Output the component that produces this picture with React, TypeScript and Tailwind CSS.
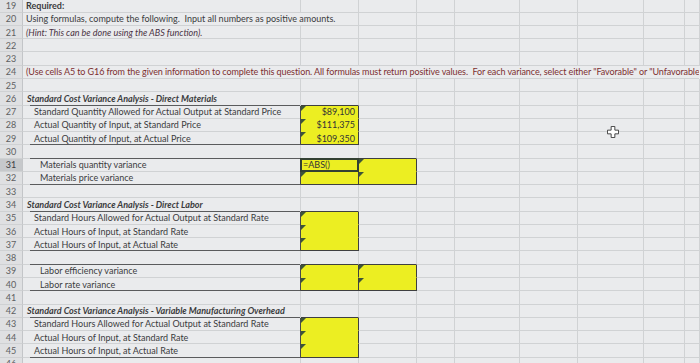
import React from "react";

type Row = {
  n: number;
  text?: string;
  x?: number;
  bold?: boolean;
  italic?: boolean;
  color?: string;
  spill?: number;
  boxBottom?: boolean;
  sel?: boolean;
  y?: number[];
  vals?: Record<number, string>;
  tri?: number[];
  active?: number;
};

const rows: Row[] = [
  { n: 19, text: "Required:", x: 26, bold: true },
  { n: 20, text: "Using formulas, compute the following.  Input all numbers as positive amounts.", x: 26, spill: 2 },
  { n: 21, text: "(Hint: This can be done using the ABS function).", x: 26, italic: true, color: "hint" },
  { n: 22 },
  { n: 23 },
  {
    n: 24,
    text: '(Use cells A5 to G16 from the given information to complete this question. All formulas must return positive values.  For each variance, select either "Favorable" or "Unfavorable"',
    x: 26,
    spill: 9,
    color: "red",
  },
  { n: 25 },
  { n: 26, text: "Standard Cost Variance Analysis - Direct Materials", x: 27, bold: true, italic: true, boxBottom: true },
  { n: 27, text: "Standard Quantity Allowed for Actual Output at Standard Price", x: 34, y: [1], vals: { 1: "$89,100" }, tri: [1] },
  { n: 28, text: "Actual Quantity of Input, at Standard Price", x: 34, y: [1], vals: { 1: "$111,375" }, tri: [1] },
  { n: 29, text: "Actual Quantity of Input, at Actual Price", x: 34, y: [1], vals: { 1: "$109,350" }, tri: [1], boxBottom: true },
  { n: 30, boxBottom: true },
  { n: 31, text: "Materials quantity variance", x: 40, y: [1, 2], sel: true, active: 1, vals: { 1: "=ABS()" }, tri: [2] },
  { n: 32, text: "Materials price variance", x: 40, y: [1, 2], tri: [1, 2], boxBottom: true },
  { n: 33 },
  { n: 34, text: "Standard Cost Variance Analysis - Direct Labor", x: 27, bold: true, italic: true, boxBottom: true },
  { n: 35, text: "Standard Hours Allowed for Actual Output at Standard Rate", x: 34, y: [1], tri: [1] },
  { n: 36, text: "Actual Hours of Input, at Standard Rate", x: 34, y: [1], tri: [1] },
  { n: 37, text: "Actual Hours of Input, at Actual Rate", x: 34, y: [1], tri: [1], boxBottom: true },
  { n: 38, boxBottom: true },
  { n: 39, text: "Labor efficiency variance", x: 40, y: [1, 2], tri: [1, 2] },
  { n: 40, text: "Labor rate variance", x: 40, y: [1, 2], tri: [1, 2], boxBottom: true },
  { n: 41 },
  { n: 42, text: "Standard Cost Variance Analysis - Variable Manufacturing Overhead", x: 27, bold: true, italic: true, boxBottom: true },
  { n: 43, text: "Standard Hours Allowed for Actual Output at Standard Rate", x: 34, y: [1], tri: [1] },
  { n: 44, text: "Actual Hours of Input, at Standard Rate", x: 34, y: [1], tri: [1] },
  { n: 45, text: "Actual Hours of Input, at Actual Rate", x: 34, y: [1], tri: [1], boxBottom: true },
  { n: 46 },
];

const COLW = [
  "w-[278px]",
  "w-[58px]",
  "w-[58px]",
  "w-[38px]",
  "w-[65px]",
  "w-[58px]",
  "w-[66px]",
  "w-[41px]",
  "flex-1",
];

const isY = (r: Row | undefined, c: number) => !!r && !!r.y && r.y.includes(c);

function TextCell({ row, widthClass, dark }: { row: Row; widthClass: string; dark: boolean }) {
  const colorCls =
    row.color === "red" ? "text-[#7d2f30] tracking-[-0.09px]" : row.color === "hint" ? "text-[#4b3344]" : "text-[#3b3b3d]";
  const pad = (row.x ?? 26) - 23;
  return (
    <div
      className={`${widthClass} shrink-0 flex flex-col border-r ${
        row.spill === 9 ? "border-r-transparent" : dark ? "border-r-[#48494b]" : "border-r-[#d0d2d4]"
      } overflow-hidden`}
    >
      <div className="flex-1 flex items-center min-h-0">
        {row.text && (
          <span
            className={`whitespace-pre leading-none ${colorCls} ${row.bold ? "font-bold" : ""} ${
              row.italic ? "italic" : ""
            }`}
            style={{ paddingLeft: pad }}
          >
            {row.text}
          </span>
        )}
      </div>
      <div className="h-px flex shrink-0">
        <div className="w-[7px] bg-[#d0d2d4]" />
        <div className={`flex-1 ${row.boxBottom ? "bg-[#5a5b5d]" : "bg-[#d0d2d4]"}`} />
      </div>
    </div>
  );
}

function DataCell({ row, next, c }: { row: Row; next?: Row; c: number }) {
  const y = isY(row, c);
  const rightDark = y || isY(row, c + 1);
  const yn = isY(next, c);
  const bottom = y !== yn ? "border-b-[#3e3f41]" : y ? "border-b-[#ecee22]" : "border-b-[#d0d2d4]";
  const right = rightDark ? "border-r-[#3e3f41]" : "border-r-[#d0d2d4]";
  const val = row.vals?.[c];
  const isActive = row.active === c;
  return (
    <div
      className={`${COLW[c]} shrink-0 relative border-r border-b ${right} ${bottom} ${
        y ? "bg-[#ecee22]" : ""
      } flex items-center ${isActive ? "justify-start pl-[2px]" : "justify-end pr-[3px]"}`}
    >
      {row.tri?.includes(c) && (
        <span className="absolute left-0 top-0 w-0 h-0 border-t-[5px] border-r-[5px] border-t-[#3d5538] border-r-transparent" />
      )}
      {val && <span className="leading-none text-[#333335]">{val}</span>}
      {isActive && <span className="pointer-events-none absolute -left-px -top-px -right-px -bottom-px border-2 border-[#334033]" />}
    </div>
  );
}

function SheetRow({ row, next }: { row: Row; next?: Row }) {
  const spill = row.spill ?? 1;
  const widthClass = spill === 2 ? "w-[336px]" : spill === 9 ? "flex-1" : COLW[0];
  const cells: number[] = [];
  for (let c = spill; c < 9; c++) cells.push(c);
  return (
    <div className="flex h-[13.28px] shrink-0">
      <div
        className={`w-[23px] shrink-0 flex items-center justify-center border-r border-b border-r-[#c3c5c8] border-b-[#cfd1d3] leading-none ${
          row.sel ? "bg-[#c6c8cb] text-[#3f4042]" : "bg-[#dfe0e2] text-[#5e5f61]"
        }`}
      >
        {row.n}
      </div>
      <TextCell row={row} widthClass={widthClass} dark={spill === 1 && isY(row, 1)} />
      {cells.map((c) => (
        <DataCell key={c} row={row} next={next} c={c} />
      ))}
    </div>
  );
}

export default function App() {
  return (
    <div className="relative w-[700px] h-[363px] overflow-hidden bg-[#eaebed] font-[Lato,sans-serif] text-[9px]">
      <div className="flex flex-col -mt-[0.6px]">
        {rows.map((r, i) => (
          <SheetRow key={r.n} row={r} next={rows[i + 1]} />
        ))}
      </div>
      <svg className="absolute left-[607px] top-[126px]" width="12" height="12" viewBox="0 0 13 13">
        <path
          d="M4.5 0.5h4v4h4v4h-4v4h-4v-4h-4v-4h4z"
          fill="#ffffff"
          stroke="#3a3a3a"
          strokeWidth="1"
        />
      </svg>
    </div>
  );
}
